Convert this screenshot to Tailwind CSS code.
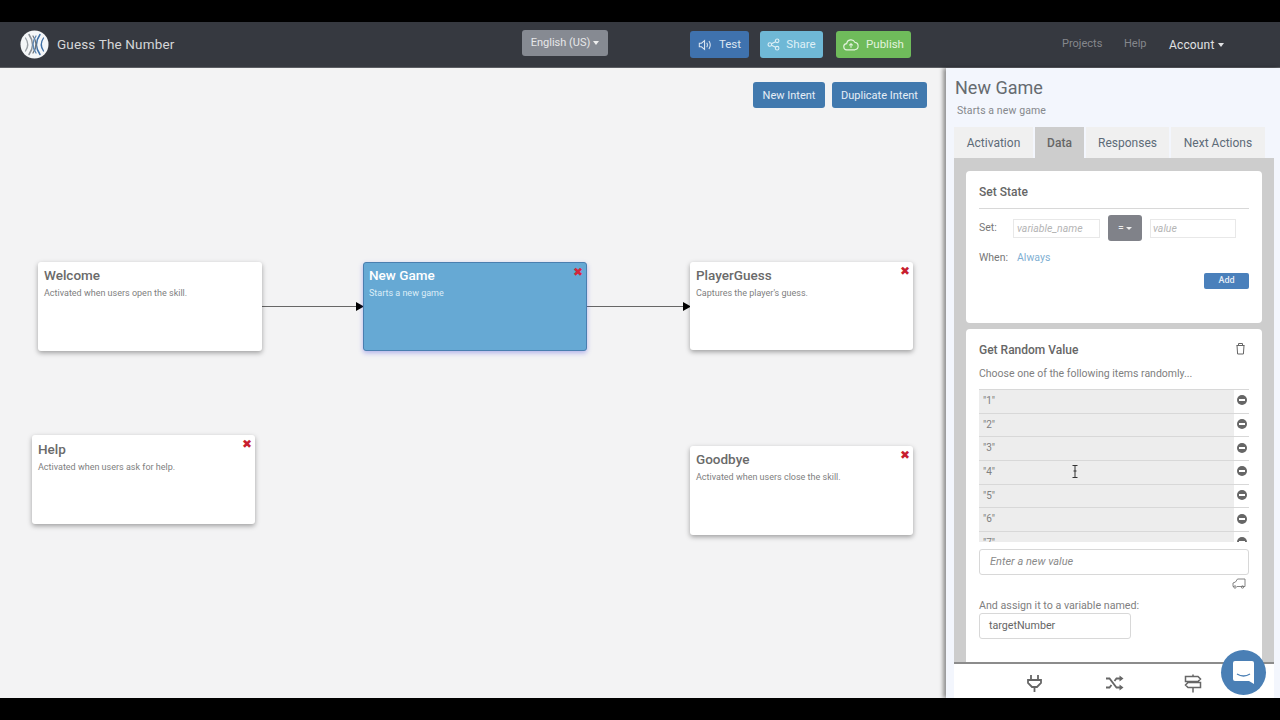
<!DOCTYPE html>
<html lang="en">
<head>
<meta charset="UTF-8">
<title>Guess The Number</title>
<script src="https://cdn.jsdelivr.net/npm/@tailwindcss/browser@4"></script>
</head>
<body class="w-[1280px] h-[720px] overflow-hidden bg-black font-['Roboto',sans-serif] pt-[22px] pb-[22px]">
<div class="h-[676px] flex flex-col bg-[#f3f3f4]">
  <!-- top nav -->
  <header class="h-[46px] shrink-0 bg-[#363940] border-b border-[#5c5e63] flex items-center relative">
    <div class="w-[522px] flex items-center pl-[20px] shrink-0">
      <svg class="w-[29px] h-[29px] shrink-0" viewBox="0 0 29 29" fill="none" stroke-linecap="round">
        <circle cx="14.5" cy="14.5" r="14" fill="#f4f6f8"/>
        <path d="M9 4.5Q16 14.500 9 24.500" stroke="#8a8f96" stroke-width="1.500"/>
        <path d="M20 4.500Q13 14.500 20 24.500" stroke="#3f6fa5" stroke-width="1.500"/>
        <path d="M5.500 8Q10 14.500 5.500 21" stroke="#9aa0a6" stroke-width="1.300"/>
        <path d="M23.500 8Q19 14.500 23.500 21" stroke="#3f6fa5" stroke-width="1.300"/>
        <path d="M13 6Q19 14.500 13 23" stroke="#6d7379" stroke-width="1.300"/>
        <path d="M16 6Q10 14.500 16 23" stroke="#5d87b5" stroke-width="1.300"/>
      </svg>
      <span class="ml-[8px] text-[13.500px] tracking-[0.15px] text-[#d5d6d8]">Guess The Number</span>
    </div>
    <button class="w-[86px] h-[26px] rounded-[3px] bg-[#868a92] text-[#e6e7e9] text-[11px] flex items-center justify-center gap-[3px] shrink-0 mt-[-3px]">English (US)<span class="w-0 h-0 border-x-[3.500px] border-x-transparent border-t-[4px] border-t-[#eee]"></span></button>
    <div class="ml-[82px] flex shrink-0">
      <button class="w-[59px] h-[27px] rounded-[3px] bg-[#3f72ae] text-[#dce6f1] text-[11.500px] flex items-center justify-center gap-[7px]">
        <svg class="w-[14px] h-[14px]" viewBox="0 0 16 16" fill="none" stroke="currentColor" stroke-width="1.200"><path d="M1.500 6h2.500l3.500-3v10l-3.500-3H1.500z"/><path d="M10 5.500q1.500 2.500 0 5M12.500 3.500q3 4.500 0 9"/></svg>Test</button>
      <button class="ml-[11px] w-[63px] h-[27px] rounded-[3px] bg-[#6fb8d6] text-[#dff0f7] text-[11.500px] flex items-center justify-center gap-[6px]">
        <svg class="w-[13px] h-[13px]" viewBox="0 0 16 16" fill="none" stroke="currentColor" stroke-width="1.300"><circle cx="3.500" cy="8" r="2.200"/><circle cx="12.500" cy="3.500" r="2.200"/><circle cx="12.500" cy="12.500" r="2.200"/><path d="M5.500 7l5-2.500M5.500 9l5 2.500"/></svg>Share</button>
      <button class="ml-[13px] w-[75px] h-[27px] rounded-[3px] bg-[#6fbb5b] text-[#e3f3de] text-[11.500px] flex items-center justify-center gap-[7px]">
        <svg class="w-[16px] h-[14px]" viewBox="0 0 18 16" fill="none" stroke="currentColor" stroke-width="1.300"><path d="M5 13.500H4.500a3.500 3.500 0 0 1-.5-7A5 5 0 0 1 13.500 5a4.300 4.300 0 0 1 0 8.500z"/><path d="M9 11V6.500M7 8.500l2-2 2 2"/></svg>Publish</button>
    </div>
    <nav class="ml-[151px] flex items-center text-[11px] shrink-0">
      <span class="text-[#85878c] w-[62px]">Projects</span>
      <span class="text-[#85878c] w-[45px]">Help</span>
      <span class="text-[#e0e1e3] text-[12px] tracking-[0.15px] flex items-center gap-[4px]">Account<span class="w-0 h-0 border-x-[3px] border-x-transparent border-t-[4px] border-t-[#e0e1e3]"></span></span>
    </nav>
  </header>

  <main class="flex-1 flex min-h-0">
    <!-- intent canvas -->
    <section class="relative w-[946px] shrink-0">
      <div class="absolute right-[19px] top-[14px] flex gap-[7px]">
        <button class="w-[72px] h-[26px] rounded-[3px] bg-[#4179ae] text-[#e6eef6] text-[11px] pt-[2px]">New Intent</button>
        <button class="w-[95px] h-[26px] rounded-[3px] bg-[#4179ae] text-[#e6eef6] text-[11px] pt-[2px]">Duplicate Intent</button>
      </div>

      <svg class="absolute left-0 top-0 w-[946px] h-[630px]" viewBox="0 0 946 630" fill="none">
        <path d="M262 238.500H357" stroke="#666" stroke-width="1.200"/>
        <path d="M356 234l8 4.500-8 4.500z" fill="#000"/>
        <path d="M587 238.500H683" stroke="#666" stroke-width="1.200"/>
        <path d="M683 234l8 4.500-8 4.500z" fill="#000"/>
      </svg>

      <div class="absolute left-[38px] top-[194px] w-[224px] h-[89px] bg-white rounded-[3px] shadow-[0_2px_5px_rgba(0,0,0,0.35)] px-[6px] pt-[4px]">
        <div class="text-[13.500px] leading-[18px] font-medium text-[#6a6a6a]">Welcome</div>
        <div class="text-[9px] leading-[12px] mt-[3px] text-[#808080]">Activated when users open the skill.</div>
      </div>
      <div class="absolute left-[363px] top-[194px] w-[224px] h-[89px] bg-[#66a9d4] border border-[#4a7fb0] rounded-[3px] shadow-[0_2px_5px_rgba(80,80,220,0.4)] px-[5px] pt-[3px]">
        <div class="text-[13.500px] leading-[18px] font-medium text-white">New Game</div>
        <div class="text-[9px] leading-[12px] mt-[3px] text-[#dcedf7]">Starts a new game</div>
        <span class="absolute right-[3px] top-[2px] text-[#d3263a] text-[12px] leading-[14px] font-bold font-['DejaVu_Sans']">✖</span>
      </div>
      <div class="absolute left-[690px] top-[194px] w-[223px] h-[88px] bg-white rounded-[3px] shadow-[0_2px_5px_rgba(0,0,0,0.35)] px-[6px] pt-[4px]">
        <div class="text-[13.500px] leading-[18px] font-medium text-[#6a6a6a]">PlayerGuess</div>
        <div class="text-[9px] leading-[12px] mt-[3px] text-[#808080]">Captures the player's guess.</div>
        <span class="absolute right-[3px] top-[2px] text-[#c81e2e] text-[12px] leading-[14px] font-bold font-['DejaVu_Sans']">✖</span>
      </div>
      <div class="absolute left-[32px] top-[367px] w-[223px] h-[89px] bg-white rounded-[3px] shadow-[0_2px_5px_rgba(0,0,0,0.35)] px-[6px] pt-[5px]">
        <div class="text-[13.500px] leading-[18px] font-medium text-[#6a6a6a]">Help</div>
        <div class="text-[9px] leading-[12px] mt-[3px] text-[#808080]">Activated when users ask for help.</div>
        <span class="absolute right-[3px] top-[2px] text-[#c81e2e] text-[12px] leading-[14px] font-bold font-['DejaVu_Sans']">✖</span>
      </div>
      <div class="absolute left-[690px] top-[378px] w-[223px] h-[89px] bg-white rounded-[3px] shadow-[0_2px_5px_rgba(0,0,0,0.35)] px-[6px] pt-[4px]">
        <div class="text-[13.500px] leading-[18px] font-medium text-[#6a6a6a]">Goodbye</div>
        <div class="text-[9px] leading-[12px] mt-[3px] text-[#808080]">Activated when users close the skill.</div>
        <span class="absolute right-[3px] top-[2px] text-[#c81e2e] text-[12px] leading-[14px] font-bold font-['DejaVu_Sans']">✖</span>
      </div>
    </section>

    <!-- side panel -->
    <aside class="relative flex-1 min-w-0 bg-[#f3f6fd] shadow-[-3px_0_4px_rgba(0,0,0,0.4)] pl-[8px] pr-[6px] flex flex-col">
      <h2 class="mt-[9px] text-[18px] leading-[22px] text-[#666b70] pl-[1px]">New Game</h2>
      <p class="mt-[6px] text-[10.500px] leading-[12px] text-[#85888c] tracking-[0.1px] pl-[3px]">Starts a new game</p>
      <div class="mt-[10px] h-[31px] flex gap-[2px] text-[12px] shrink-0">
        <div class="w-[79px] bg-[#f0f0f0] text-[#5d6b78] flex items-center justify-center">Activation</div>
        <div class="w-[49px] bg-[#cdcdcd] text-[#666] font-medium flex items-center justify-center">Data</div>
        <div class="w-[83px] bg-[#f0f0f0] text-[#5d6b78] flex items-center justify-center">Responses</div>
        <div class="w-[94px] bg-[#f0f0f0] text-[#5d6b78] flex items-center justify-center">Next Actions</div>
      </div>
      <div class="h-[506px] bg-[#cdcdcd] px-[12px] pt-[13px] shrink-0 overflow-hidden">
        <!-- set state -->
        <div class="h-[152px] bg-white rounded-[4px] px-[13px] pt-[14px]">
          <div class="text-[12px] leading-[14px] font-medium text-[#666] pb-[9px] border-b border-[#d8d8d8]">Set State</div>
          <div class="mt-[6px] flex items-center text-[10.500px] text-[#777]">
            <span class="w-[34px]">Set:</span>
            <span class="w-[87px] h-[19px] border border-[#e8e8e8] pl-[3px] italic text-[#b5b5b5] leading-[17px]">variable_name</span>
            <span class="ml-[8px] w-[34px] h-[26px] rounded-[3px] bg-[#808289] text-[#eee] flex items-center justify-center gap-[2px]">=<span class="w-0 h-0 border-x-[3px] border-x-transparent border-t-[3px] border-t-[#eee]"></span></span>
            <span class="ml-[8px] w-[86px] h-[19px] border border-[#e8e8e8] pl-[2px] italic text-[#b5b5b5] leading-[17px]">value</span>
          </div>
          <div class="mt-[11px] flex text-[10.500px] leading-[12px]">
            <span class="w-[38px] text-[#777]">When:</span><span class="text-[#7fb0d3]">Always</span>
          </div>
          <div class="mt-[9px] flex justify-end">
            <button class="w-[45px] h-[16px] rounded-[2px] bg-[#4a80bb] text-[#e4edf6] text-[9px] font-medium">Add</button>
          </div>
        </div>
        <!-- get random value -->
        <div class="mt-[6px] h-[340px] bg-white rounded-[4px] px-[13px] pt-[14px]">
          <div class="flex items-center justify-between pr-[2px]">
            <span class="text-[12px] leading-[14px] font-medium text-[#666]">Get Random Value</span>
            <svg class="w-[13px] h-[13px] mt-[-3px]" viewBox="0 0 13 13" fill="none" stroke="#666" stroke-width="1"><path d="M2.500 3.500h8M3 3.500l.6 8.500h5.800l.6-8.500M4.500 3.500V1.500h4v2"/></svg>
          </div>
          <p class="mt-[11px] text-[10.500px] leading-[12px] text-[#808080]">Choose one of the following items randomly...</p>
          <div class="mt-[9px] h-[153px] overflow-hidden text-[10px] text-[#808080]">
            <div class="h-[23.700px] flex border-t border-[#d8d8d8]"><span class="w-[255px] bg-[#ededed] pl-[4px] leading-[22px]">"1"</span><span class="flex-1 flex items-center justify-end pr-[2px] pb-[2px]"><span class="w-[10px] h-[10px] rounded-full bg-[#666] flex items-center justify-center"><span class="w-[6px] h-[2px] bg-white"></span></span></span></div>
            <div class="h-[23.700px] flex border-t border-[#d8d8d8]"><span class="w-[255px] bg-[#ededed] pl-[4px] leading-[22px]">"2"</span><span class="flex-1 flex items-center justify-end pr-[2px] pb-[2px]"><span class="w-[10px] h-[10px] rounded-full bg-[#666] flex items-center justify-center"><span class="w-[6px] h-[2px] bg-white"></span></span></span></div>
            <div class="h-[23.700px] flex border-t border-[#d8d8d8]"><span class="w-[255px] bg-[#ededed] pl-[4px] leading-[22px]">"3"</span><span class="flex-1 flex items-center justify-end pr-[2px] pb-[2px]"><span class="w-[10px] h-[10px] rounded-full bg-[#666] flex items-center justify-center"><span class="w-[6px] h-[2px] bg-white"></span></span></span></div>
            <div class="h-[23.700px] flex border-t border-[#d8d8d8]"><span class="w-[255px] bg-[#ededed] pl-[4px] leading-[22px]">"4"</span><span class="flex-1 flex items-center justify-end pr-[2px] pb-[2px]"><span class="w-[10px] h-[10px] rounded-full bg-[#666] flex items-center justify-center"><span class="w-[6px] h-[2px] bg-white"></span></span></span></div>
            <div class="h-[23.700px] flex border-t border-[#d8d8d8]"><span class="w-[255px] bg-[#ededed] pl-[4px] leading-[22px]">"5"</span><span class="flex-1 flex items-center justify-end pr-[2px] pb-[2px]"><span class="w-[10px] h-[10px] rounded-full bg-[#666] flex items-center justify-center"><span class="w-[6px] h-[2px] bg-white"></span></span></span></div>
            <div class="h-[23.700px] flex border-t border-[#d8d8d8]"><span class="w-[255px] bg-[#ededed] pl-[4px] leading-[22px]">"6"</span><span class="flex-1 flex items-center justify-end pr-[2px] pb-[2px]"><span class="w-[10px] h-[10px] rounded-full bg-[#666] flex items-center justify-center"><span class="w-[6px] h-[2px] bg-white"></span></span></span></div>
            <div class="h-[23.700px] flex border-t border-[#d8d8d8]"><span class="w-[255px] bg-[#ededed] pl-[4px] leading-[22px]">"7"</span><span class="flex-1 flex items-center justify-end pr-[2px] pb-[2px]"><span class="w-[10px] h-[10px] rounded-full bg-[#666] flex items-center justify-center"><span class="w-[6px] h-[2px] bg-white"></span></span></span></div>
          </div>
          <div class="mt-[7px] h-[26px] border border-[#d8d8d8] rounded-[3px] pl-[10px] text-[11px] leading-[24px] italic text-[#8a8a8a]">Enter a new value</div>
          <div class="h-[17px] flex justify-end items-center pr-[3px]">
            <svg class="w-[14px] h-[11px]" viewBox="0 0 14 11" fill="none" stroke="#777" stroke-width="0.900"><path d="M5 8.500h8V1H5.500L3.500 4 1 5v3.500h1"/><circle cx="3" cy="9" r="1.200"/><circle cx="10.500" cy="9" r="1.200"/></svg>
          </div>
          <p class="mt-[8px] text-[10.700px] leading-[12px] text-[#808080]">And assign it to a variable named:</p>
          <div class="mt-[1px] w-[152px] h-[26px] border border-[#d8d8d8] rounded-[3px] pl-[9px] text-[10.700px] leading-[24px] text-[#666]">targetNumber</div>
        </div>
      </div>
      <!-- bottom toolbar -->
      <div class="absolute left-[8px] right-[6px] bottom-0 h-[36px] bg-white border-t-2 border-[#8c8c8c] flex items-center text-[#666]">
        <svg class="absolute left-[72px] top-[10px] w-[17px] h-[19px]" viewBox="0 0 17 19" fill="none" stroke="#666" stroke-width="1.800"><path d="M5 1v5M12 1v5M2 6h13v3l-4 4H6l-4-4zM8.500 13v5"/></svg>
        <svg class="absolute left-[151px] top-[11px] w-[19px] h-[16px]" viewBox="0 0 19 16" fill="none" stroke="#666" stroke-width="1.800"><path d="M1 3.500h3.500l7 9H15M1 12.500h3.500l2-2.500M9.500 6l2-2.500H15"/><path d="M14.500 0.500l4 3-4 3zM14.500 9.500l4 3-4 3z" fill="#666" stroke="none"/></svg>
        <svg class="absolute left-[230px] top-[10px] w-[18px] h-[19px]" viewBox="0 0 18 19" fill="none" stroke="#666" stroke-width="1.500"><path d="M9 0.500v2M9 7.500v1M9 13.500v5M1.500 2.500h12.500l2.500 2.500-2.500 2.500H1.500zM16.500 8.500H4L1.500 11 4 13.500h12.500z"/></svg>
      </div>
      <!-- chat bubble -->
      <div class="absolute left-[275px] top-[582px] w-[45px] h-[45px] rounded-full bg-[#4a7fb5] flex items-center justify-center">
        <svg class="w-[23px] h-[25px]" viewBox="0 0 23 25"><path d="M3 1h17a2 2 0 0 1 2 2v21l-5-3H3a2 2 0 0 1-2-2V3a2 2 0 0 1 2-2z" fill="#fff"/><path d="M5 14q6.500 4 13 0" fill="none" stroke="#4a7fb5" stroke-width="1.300"/></svg>
      </div>
    </aside>
  </main>
</div>
<!-- text cursor -->
<svg class="absolute left-[1072px] top-[465px] w-[6px] h-[13px]" viewBox="0 0 6 13" fill="none" stroke="#333" stroke-width="1"><path d="M0.500 0.500h5M3 0.500v12M0.500 12.500h5M1.500 6h3"/></svg>
</body>
</html>
